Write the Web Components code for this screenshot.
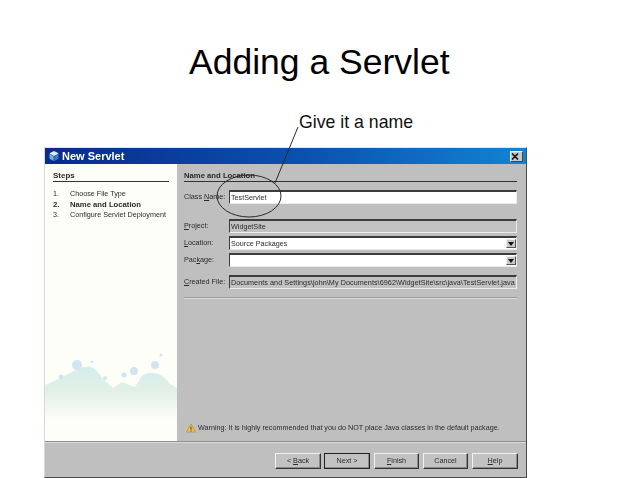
<!DOCTYPE html>
<html>
<head>
<meta charset="utf-8">
<style>
  html, body { margin: 0; padding: 0; background: #fff; }
  body { width: 638px; height: 478px; overflow: hidden; font-family: "Liberation Sans", sans-serif; }
</style>
</head>
<body>
<slide-page heading="Adding a Servlet" note="Give it a name">
  <wizard-window caption="New Servlet">
    <wizard-steps slot="steps"></wizard-steps>
    <form-row label="Class _Name:" value="TestServlet" kind="text"></form-row>
    <form-row label="_Project:" value="WidgetSite" kind="readonly" style="margin-top:15px"></form-row>
    <form-row label="_Location:" value="Source Packages" kind="combo" style="margin-top:3px"></form-row>
    <form-row label="Pac_kage:" value="" kind="combo" style="margin-top:3px"></form-row>
    <form-row label="_Created File:" value="Documents and Settings\john\My Documents\6962\WidgetSite\src\java\TestServlet.java" kind="readonly" style="margin-top:8px;--field-spacing:.07px"></form-row>
    <wiz-button slot="buttons" label="< _Back" style="width:46px"></wiz-button>
    <wiz-button slot="buttons" label="Next >" focused style="margin-left:3px"></wiz-button>
    <wiz-button slot="buttons" label="_Finish" style="margin-left:4px"></wiz-button>
    <wiz-button slot="buttons" label="Cancel" style="margin-left:4px"></wiz-button>
    <wiz-button slot="buttons" label="_Help" style="margin-left:4px;width:46px"></wiz-button>
  </wizard-window>
</slide-page>

<script>
// mnemonic marker: "_B" becomes an underlined B
const mnemonic = (text) => text
  .replace(/</g, '&lt;').replace(/>/g, '&gt;')
  .replace(/_(.)/, '<u>$1</u>');

// Slide: title, note and the callout drawn over the screenshot
class SlidePage extends HTMLElement {
  constructor() {
    super();
    this.attachShadow({ mode: 'open' });
  }
  connectedCallback() {
    this.shadowRoot.innerHTML = `
      <style>
        :host { display: flex; flex-direction: column; position: relative; width: 638px; height: 478px; color: #000; }
        h1 { margin: 41px 0 0 189px; font: 400 35.5px/42px "Liberation Sans", sans-serif; white-space: nowrap; }
        .note { margin: 29px 0 0 299px; font: 400 17.7px/21px "Liberation Sans", sans-serif; white-space: nowrap; color: #111; }
        .shot { margin: 14px 0 0 44px; }
        svg { position: absolute; left: 0; top: 0; pointer-events: none; }
      </style>
      <h1>${this.getAttribute('heading')}</h1>
      <div class="note">${this.getAttribute('note')}</div>
      <div class="shot"><slot></slot></div>
      <svg width="638" height="478" fill="none" stroke="#2a2a2a" stroke-width="1">
        <path d="M298 127 L275 183"/>
        <ellipse cx="249" cy="196" rx="32" ry="21"/>
      </svg>`;
  }
}

// Dialog frame with title bar, left steps panel, form and button row
class WizardWindow extends HTMLElement {
  constructor() {
    super();
    this.attachShadow({ mode: 'open' });
  }
  connectedCallback() {
    this.shadowRoot.innerHTML = `
      <style>
        :host { display: block; width: 483px; height: 331px; box-sizing: border-box; background: #bfbfbf;
          border: 1px solid #4a4a4a; border-left-color: #d8d8d8; border-top-color: #e4e4e4;
          filter: blur(.5px); font: 400 7.2px/10px "Liberation Sans", sans-serif; color: #2a2a2a; }
        .title { display: flex; align-items: center; height: 16px; padding: 0 3px 0 4px; background: linear-gradient(90deg, #0a2a8e, #0a52ae 55%, #1284d4); color: #fff; }
        .title svg { margin-right: 3px; }
        .title b { font: 700 11px/16px "Liberation Sans", sans-serif; flex: 1; }
        .close { width: 13px; height: 11px; background: #c8c8c8; border: 1px solid; border-color: #eee #444 #444 #eee; box-sizing: border-box; display: flex; align-items: center; justify-content: center; }
        .body { display: flex; height: 277px; }
        .side { width: 132px; flex: none; position: relative; box-sizing: border-box; background: #fefef8; padding: 7px 8px 0; }
        .main { flex: 1; min-width: 0; padding: 7px 9px 0 7px; display: flex; flex-direction: column; position: relative; }
        .head { font-weight: 700; font-size: 7.7px; border-bottom: 1px solid #333; margin-bottom: 8px; }
        .rule { height: 1px; background: #9a9a9a; margin-top: 8px; box-shadow: 0 1px 0 #ddd; }
        .warn { position: absolute; left: 9px; top: 259px; display: flex; align-items: center; gap: 2px; white-space: nowrap; }
        .foot { border-top: 1px solid #8e8e8e; box-shadow: inset 0 1px 0 #dadada; height: 36px; display: flex; justify-content: flex-end; padding: 11px 8px 0 0; box-sizing: border-box; }
      </style>
      <div class="title">
        <svg width="10" height="10" viewBox="0 0 10 10"><path d="M5 0 L9 2 Q9.500 2.500 9 3 L5 5 L1 3 Q.5 2.500 1 2Z" fill="#d8ecf8"/><path d="M.5 3 L4.700 5.200 V10 L1 8 Q.5 7.700 .5 7Z" fill="#6fb0e0"/><path d="M9.500 3 L5.300 5.200 V10 L9 8 Q9.500 7.700 9.500 7Z" fill="#3a7cbc"/></svg>
        <b>${this.getAttribute('caption')}</b>
        <span class="close"><svg width="8" height="7" viewBox="0 0 8 7"><path d="M1 .5 L7 6.500 M7 .5 L1 6.500" stroke="#111" stroke-width="1.600"/></svg></span>
      </div>
      <div class="body">
        <div class="side"><slot name="steps"></slot></div>
        <div class="main">
          <div class="head">Name and Location</div>
          <slot></slot>
          <div class="rule"></div>
          <div class="warn">
            <svg width="10" height="10" viewBox="0 0 11 10"><path d="M5.500 .5 L10.500 9.500 H.5Z" fill="#f0c244" stroke="#a88c34" stroke-width=".7"/><path d="M5.500 3.500 V6.800 M5.500 7.600 V8.800" stroke="#333" stroke-width="1"/></svg>
            <span>Warning: It is highly recommended that you do NOT place Java classes in the default package.</span>
          </div>
        </div>
      </div>
      <div class="foot"><slot name="buttons"></slot></div>`;
  }
}

// Steps list plus the faint splash artwork of the side panel
class WizardSteps extends HTMLElement {
  constructor() {
    super();
    this.attachShadow({ mode: 'open' });
  }
  connectedCallback() {
    const steps = [['1.', 'Choose File Type'], ['2.', 'Name and Location', true], ['3.', 'Configure Servlet Deployment']];
    this.shadowRoot.innerHTML = `
      <style>
        :host { display: block; }
        .head { font-weight: 700; font-size: 8px; border-bottom: 1px solid #333; margin-bottom: 7px; width: 116px; }
        .step { display: flex; height: 10.500px; white-space: nowrap; }
        .step span:first-child { width: 17px; flex: none; }
        .on { font-weight: 700; font-size: 7.7px; }
        svg { position: absolute; left: 0; bottom: 0; }
      </style>
      <div class="head">Steps</div>
      ${steps.map(s => `<div class="step ${s[2] ? 'on' : ''}"><span>${s[0]}</span><span>${s[1]}</span></div>`).join('')}
      <svg width="132" height="100" viewBox="0 0 132 100">
        <defs>
          <linearGradient id="hill" x1="0" y1="0" x2="0" y2="1">
            <stop offset="0" stop-color="#d4eeee"/><stop offset=".45" stop-color="#e2f0e4"/><stop offset="1" stop-color="#fefef8"/>
          </linearGradient>
        </defs>
        <path d="M0 44 L14 38 L25 32 C36 26 44 22 52 30 L58 38 L68 47 L77 41 L90 46 L96 36 C104 28 118 32 124 42 L132 47 V80 H0Z" fill="url(#hill)"/>
        <g fill="#cfe5ef">
          <circle cx="32" cy="24" r="5"/><circle cx="16" cy="36" r="2.500"/><circle cx="89" cy="30" r="4"/><circle cx="110" cy="24" r="4"/>
          <circle cx="79" cy="34" r="2.500"/><circle cx="116" cy="14" r="1.500"/><circle cx="60" cy="37" r="2"/><circle cx="47" cy="21" r="1.200"/>
        </g>
      </svg>`;
  }
}

// Label + field row; kind is text, readonly or combo
class FormRow extends HTMLElement {
  constructor() {
    super();
    this.attachShadow({ mode: 'open' });
  }
  connectedCallback() {
    const kind = this.getAttribute('kind');
    this.shadowRoot.innerHTML = `
      <style>
        :host { display: flex; align-items: center; height: 14px; white-space: nowrap; }
        label { width: 45px; flex: none; }
        .field { flex: 1; min-width: 0; height: 14px; box-sizing: border-box; border: 1px solid; border-top-width: 2px; border-color: #3c3c3c #ececec #ececec #3c3c3c; padding: 0 1px;
          display: flex; align-items: center; overflow: hidden; letter-spacing: var(--field-spacing, 0); background: ${kind === 'readonly' ? '#c2c2c2' : '#fff'}; position: relative; }
        .arrow { position: absolute; right: 0; top: 1px; width: 10px; height: 9px; background: #c8c8c8; border: 1px solid; border-color: #eee #555 #555 #eee; box-sizing: border-box; display: flex; align-items: center; justify-content: center; }
      </style>
      <label>${mnemonic(this.getAttribute('label'))}</label>
      <div class="field">
        <span>${this.getAttribute('value')}</span>
        ${kind === 'combo' ? '<span class="arrow"><svg width="6" height="4" viewBox="0 0 6 4"><path d="M0 0 H6 L3 4Z" fill="#111"/></svg></span>' : ''}
      </div>`;
  }
}

class WizButton extends HTMLElement {
  constructor() {
    super();
    this.attachShadow({ mode: 'open' });
  }
  connectedCallback() {
    this.shadowRoot.innerHTML = `
      <style>
        :host { display: inline-flex; width: 45px; height: 16px; box-sizing: border-box; align-items: center; justify-content: center;
          background: #c2c2c2; border: 1px solid; border-color: #f2f2f2 #333 #333 #f2f2f2; box-shadow: inset -1px -1px 0 #8a8a8a; vertical-align: top; }
        :host([focused]) { width: 46px; outline: 1px solid #222; outline-offset: -1px; }
      </style>
      <span>${mnemonic(this.getAttribute('label'))}</span>`;
  }
}

customElements.define('slide-page', SlidePage);
customElements.define('wizard-window', WizardWindow);
customElements.define('wizard-steps', WizardSteps);
customElements.define('form-row', FormRow);
customElements.define('wiz-button', WizButton);
</script>
</body>
</html>
